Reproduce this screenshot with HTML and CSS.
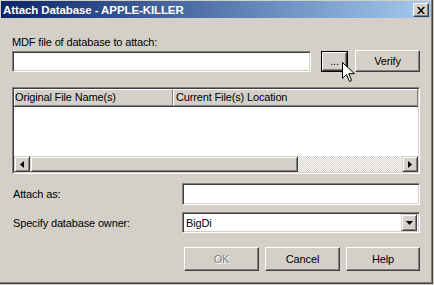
FILE: index.html
```html
<!DOCTYPE html>
<html>
<head>
<meta charset="utf-8">
<link rel="stylesheet" href="styles.css">
</head>
<body>
<div class="window">
  <div class="titlebar">
    <span class="title">Attach Database - APPLE-KILLER</span>
    <span class="close"><svg width="8" height="7" viewBox="0 0 8 7"><path d="M0 0h2l2 2.5L6 0h2L5 3.5 8 7H6L4 4.5 2 7H0l3-3.5z" fill="#000"/></svg></span>
  </div>
  <div class="content">
    <div class="label first">MDF file of database to attach:</div>
    <div class="row1">
      <div class="input mdf"></div>
      <div class="btn focus dots"><span class="inner">...</span></div>
      <div class="btn verify">Verify</div>
    </div>
    <div class="list">
      <div class="lheader">
        <div class="col c1">Original File Name(s)</div>
        <div class="col c2">Current File(s) Location</div>
      </div>
      <div class="lbody"></div>
      <div class="hscroll">
        <div class="sbtn"><svg width="4" height="7" viewBox="0 0 4 7"><path d="M4 0v7L0 3.5z" fill="#000"/></svg></div>
        <div class="thumb"></div>
        <div class="track"></div>
        <div class="sbtn"><svg width="4" height="7" viewBox="0 0 4 7"><path d="M0 0v7l4-3.5z" fill="#000"/></svg></div>
      </div>
    </div>
    <div class="frow attach">
      <span class="flabel">Attach as:</span>
      <div class="input field"></div>
    </div>
    <div class="frow owner">
      <span class="flabel">Specify database owner:</span>
      <div class="input field combo">
        <span class="val">BigDi</span>
        <div class="dd"><svg width="7" height="4" viewBox="0 0 7 4"><path d="M0 0h7L3.5 4z" fill="#000"/></svg></div>
      </div>
    </div>
    <div class="buttons">
      <div class="btn big disabled">OK</div>
      <div class="btn big">Cancel</div>
      <div class="btn big">Help</div>
    </div>
  </div>
  <svg class="cursor" width="13" height="21" viewBox="0 0 13 21"><path d="M0.5 0.5v16l4-4 3 7 2.2-1-3-6.8h5.8z" fill="#fff" stroke="#000" stroke-width="1" stroke-linejoin="miter"/></svg>
</div>
</body>
</html>
```
FILE: styles.css
```css
html, body {
  margin: 0;
  padding: 0;
  background: #d4d0c8;
}
* { box-sizing: border-box; }
.window {
  position: relative;
  width: 433px;
  height: 284px;
  background: #d4d0c8;
  border-right: 1px solid #404040;
  border-bottom: 1px solid #404040;
  box-shadow: inset -1px -1px #808080;
  font-family: "Liberation Sans", Arial, sans-serif;
  font-size: 11px;
  letter-spacing: -0.15px;
  color: #000;
  display: flex;
  flex-direction: column;
  padding: 1px 0 0 1px;
}
.titlebar {
  height: 17px;
  margin-right: 1px;
  background: linear-gradient(to right, #0a246a 0%, #a6caf0 100%);
  display: flex;
  align-items: center;
  justify-content: space-between;
  padding: 0 2px 0 2px;
}
.title {
  color: #fff;
  font-weight: bold;
  font-size: 11.5px;
  letter-spacing: -0.1px;
}
.close {
  width: 16px;
  height: 14px;
  background: #d4d0c8;
  border: 1px solid;
  border-color: #fff #404040 #404040 #fff;
  box-shadow: inset -1px -1px #808080;
  display: flex;
  align-items: center;
  justify-content: center;
  margin-top: 1px;
}
.content {
  padding: 0 12px 0 11px;
  display: flex;
  flex-direction: column;
}
.label {
  line-height: 13px;
}
.label.first {
  margin-top: 18px;
}
.input {
  background: #fff;
  border: 1px solid;
  border-color: #808080 #fff #fff #808080;
  box-shadow: inset 1px 1px #404040, inset -1px -1px #d4d0c8;
}
.btn {
  background: #d4d0c8;
  border: 1px solid;
  border-color: #fff #404040 #404040 #fff;
  box-shadow: inset -1px -1px #808080;
  display: flex;
  align-items: center;
  justify-content: center;
}
.row1 {
  display: flex;
  align-items: flex-end;
  margin-top: 1px;
  height: 22px;
}
.mdf {
  width: 299px;
  height: 21px;
}
.dots {
  margin-left: 10px;
  width: 27px;
  height: 21px;
  border: 1px solid #000;
  box-shadow: none;
  padding: 0;
}
.dots .inner {
  width: 100%;
  height: 100%;
  border: 1px solid;
  border-color: #fff #404040 #404040 #fff;
  box-shadow: inset -1px -1px #808080;
  display: flex;
  align-items: center;
  justify-content: center;
  padding-bottom: 2px;
}
.verify {
  margin-left: 7px;
  width: 65px;
  height: 22px;
}
.list {
  margin-top: 15px;
  width: 408px;
  height: 87px;
  border: 1px solid;
  border-color: #808080 #fff #fff #808080;
  box-shadow: inset 1px 1px #404040, inset -1px -1px #d4d0c8;
  padding: 1px;
  display: flex;
  flex-direction: column;
}
.lheader {
  display: flex;
  height: 18px;
  border-bottom: 1px solid #404040;
  background: #d4d0c8;
}
.col {
  height: 17px;
  border: 1px solid;
  border-color: #fff #808080 #808080 #fff;
  line-height: 15px;
  white-space: nowrap;
  overflow: hidden;
}
.c1 { width: 159px; padding-left: 0; }
.c2 { flex: 1; padding-left: 2px; }
.lbody {
  flex: 1;
  background: #fff;
}
.hscroll {
  height: 16px;
  display: flex;
}
.sbtn {
  width: 16px;
  height: 16px;
  background: #d4d0c8;
  border: 1px solid;
  border-color: #d4d0c8 #404040 #404040 #d4d0c8;
  box-shadow: inset 1px 1px #fff, inset -1px -1px #808080;
  display: flex;
  align-items: center;
  justify-content: center;
}
.thumb {
  width: 268px;
  height: 16px;
  background: #d4d0c8;
  border: 1px solid;
  border-color: #d4d0c8 #404040 #404040 #d4d0c8;
  box-shadow: inset 1px 1px #fff, inset -1px -1px #808080;
}
.track {
  flex: 1;
  background-color: #fff;
  background-image: repeating-conic-gradient(#d4d0c8 0 25%, #fff 0 50%);
  background-size: 2px 2px;
}
.frow {
  display: flex;
  align-items: center;
  justify-content: space-between;
  width: 408px;
}
.frow.attach { margin-top: 9px; }
.frow.owner { margin-top: 7px; }
.flabel { padding-left: 1px; }
.field {
  width: 238px;
  height: 22px;
}
.owner .field { height: 21px; }
.combo {
  display: flex;
  align-items: center;
  justify-content: space-between;
  padding: 2px 2px 2px 3px;
}
.dd {
  width: 16px;
  height: 17px;
  background: #d4d0c8;
  border: 1px solid;
  border-color: #d4d0c8 #404040 #404040 #d4d0c8;
  box-shadow: inset 1px 1px #fff, inset -1px -1px #808080;
  display: flex;
  align-items: center;
  justify-content: center;
}
.buttons {
  margin-top: 14px;
  display: flex;
  justify-content: flex-end;
  gap: 6px;
  width: 408px;
}
.big {
  width: 75px;
  height: 24px;
}
.big:last-child { width: 74px; }
.disabled {
  color: #808080;
  text-shadow: 1px 1px #fff;
}
.cursor {
  position: absolute;
  left: 342px;
  top: 62px;
}
```
